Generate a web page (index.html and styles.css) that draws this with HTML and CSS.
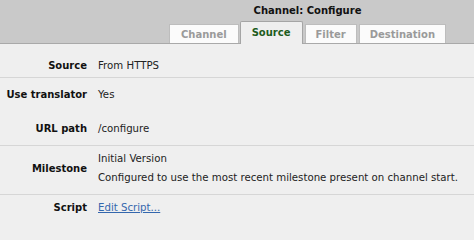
FILE: index.html
```html
<!DOCTYPE html>
<html>
<head>
<meta charset="utf-8">
<link rel="stylesheet" href="styles.css">
</head>
<body>
<div class="header">
  <div class="header-inner">
    <div class="title">Channel: Configure</div>
    <div class="tabs">
      <div class="tab tab-wide">Channel</div>
      <div class="tab active">Source</div>
      <div class="tab">Filter</div>
      <div class="tab">Destination</div>
    </div>
  </div>
</div>
<div class="content">
  <div class="row row-first">
    <div class="label">Source</div>
    <div class="value">From HTTPS</div>
  </div>
  <div class="row row-tall row-noline">
    <div class="label">Use translator</div>
    <div class="value">Yes</div>
  </div>
  <div class="row row-tall">
    <div class="label">URL path</div>
    <div class="value">/configure</div>
  </div>
  <div class="row row-multi">
    <div class="label">Milestone</div>
    <div class="value">
      <p class="para">Initial Version</p>
      <p class="para">Configured to use the most recent milestone present on channel start.</p>
    </div>
  </div>
  <div class="row row-last row-noline">
    <div class="label">Script</div>
    <div class="value"><a class="link" href="#">Edit Script...</a></div>
  </div>
</div>
</body>
</html>
```
FILE: styles.css
```css
html, body {
  margin: 0;
  padding: 0;
  background: #efefef;
}
body {
  font-family: "DejaVu Sans", Verdana, sans-serif;
  font-size: 10px;
  color: #111;
  width: 474px;
  height: 219px;
  overflow: hidden;
}
.header {
  background: #c9c9c9;
  height: 43px;
  border-bottom: 1px solid #a9a9a9;
  display: flex;
  justify-content: flex-end;
  padding-right: 28px;
}
.header-inner {
  display: flex;
  flex-direction: column;
  align-items: center;
}
.title {
  font-weight: bold;
  font-size: 10px;
  line-height: 12px;
  margin-top: 5px;
  color: #111;
}
.tabs {
  display: flex;
  align-items: flex-end;
  gap: 2px;
  margin-top: auto;
}
.tab {
  background: #fbfbfb;
  color: #9a9a9a;
  font-weight: bold;
  font-size: 10px;
  line-height: 19px;
  height: 19px;
  padding: 0 10px;
  border: 1px solid #bdbdbd;
  border-bottom: none;
  box-sizing: border-box;
}
.tab-wide {
  padding: 0 11px;
  margin-right: -1px;
}
.tab.active {
  background: #efefef;
  color: #1d5c1d;
  height: 23px;
  line-height: 22px;
  padding: 0 11px;
  margin-bottom: -1px;
  border-color: #a5a5a5;
  border-radius: 2px 2px 0 0;
}
.content {
  padding-top: 10px;
}
.row {
  display: flex;
  align-items: center;
  border-bottom: 1px solid #d6d6d6;
  line-height: 13px;
}
.row-noline {
  border-bottom-color: transparent;
}
.row-first {
  padding: 5px 0;
}
.row-tall {
  padding: 10px 0;
}
.row-multi {
  padding: 6px 0 10px;
}
.row-last {
  padding: 6px 0;
}
.label {
  width: 87px;
  flex: none;
  text-align: right;
  font-weight: bold;
  color: #111;
}
.value {
  padding-left: 11px;
  color: #222;
  font-size: 10.2px;
}
.para {
  margin: 0;
}
.para + .para {
  margin-top: 6px;
}
.link {
  color: #3467ad;
  text-decoration: underline;
}
```
